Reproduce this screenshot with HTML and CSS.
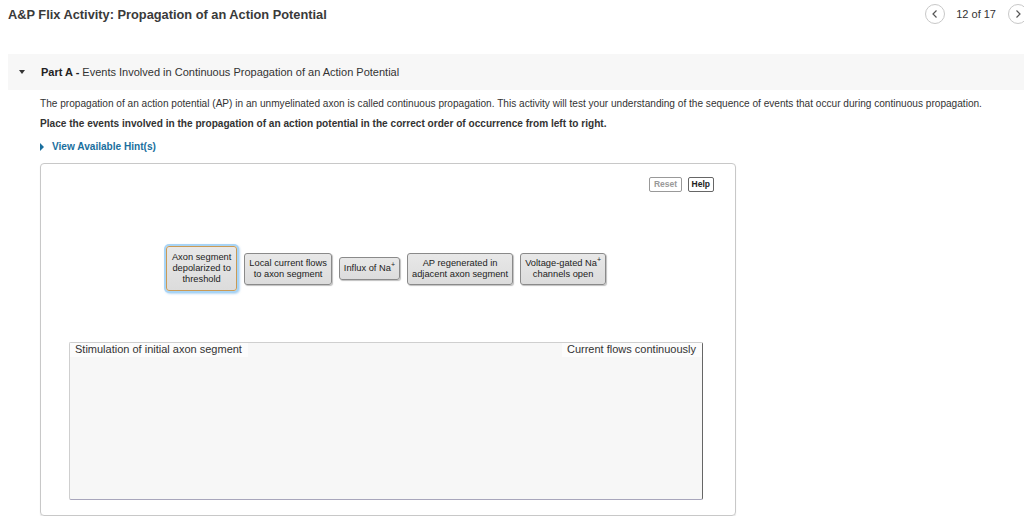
FILE: index.html
```html
<!DOCTYPE html>
<html lang="en">
<head>
  <meta charset="UTF-8">
  <meta name="viewport" content="width=device-width, initial-scale=1.0">
  <title>A&amp;P Flix Activity</title>
  <link rel="stylesheet" href="styles.css">
</head>
<body>
  <header class="top-bar">
    <h1 class="activity-title">A&amp;P Flix Activity: Propagation of an Action Potential</h1>
    <nav class="pager">
      <span class="pager-btn">
        <svg width="10" height="10" viewBox="0 0 10 10"><path d="M6.5 1.5 L3 5 L6.5 8.5" fill="none" stroke="#555" stroke-width="1.2"/></svg>
      </span>
      <span class="pager-count">12 of 17</span>
      <span class="pager-btn">
        <svg width="10" height="10" viewBox="0 0 10 10"><path d="M3.5 1.5 L7 5 L3.5 8.5" fill="none" stroke="#555" stroke-width="1.2"/></svg>
      </span>
    </nav>
  </header>

  <section class="part">
    <div class="part-head">
      <span class="caret-down"></span>
      <span><b>Part A -</b> Events Involved in Continuous Propagation of an Action Potential</span>
    </div>

    <div class="part-body">
      <p class="intro">The propagation of an action potential (AP) in an unmyelinated axon is called continuous propagation. This activity will test your understanding of the sequence of events that occur during continuous propagation.</p>
      <p class="task">Place the events involved in the propagation of an action potential in the correct order of occurrence from left to right.</p>
      <a class="hint-link" href="#"><span class="caret-right"></span>View Available Hint(s)</a>

      <div class="sorter">
        <div class="sorter-tools">
          <button class="tool-btn disabled">Reset</button>
          <button class="tool-btn">Help</button>
        </div>

        <div class="tiles">
          <div class="tile selected">Axon segment<br>depolarized to<br>threshold</div>
          <div class="tile">Local current flows<br>to axon segment</div>
          <div class="tile small">Influx of Na<sup>+</sup></div>
          <div class="tile">AP regenerated in<br>adjacent axon segment</div>
          <div class="tile">Voltage-gated Na<sup>+</sup><br>channels open</div>
        </div>

        <div class="drop-zone">
          <div class="drop-labels">
            <span class="drop-label">Stimulation of initial axon segment</span>
            <span class="drop-label">Current flows continuously</span>
          </div>
        </div>
      </div>
    </div>
  </section>
</body>
</html>
```

FILE: styles.css
```css
* {
  margin: 0;
  padding: 0;
  box-sizing: border-box;
}

body {
  font-family: "Liberation Sans", Arial, sans-serif;
  color: #333;
  background: #fff;
  overflow: hidden;
}

/* title row */
.top-bar {
  display: flex;
  justify-content: space-between;
  align-items: center;
  height: 28px;
  padding-left: 8px;
  margin-right: -4px;
}

.activity-title {
  font-size: 12.8px;
  font-weight: bold;
  color: #3a3a3a;
}

.pager {
  display: flex;
  align-items: center;
  gap: 6px;
}

.pager-btn {
  width: 20px;
  height: 20px;
  border: 1px solid #c8c8c8;
  border-radius: 50%;
  display: flex;
  align-items: center;
  justify-content: center;
}

.pager-count {
  font-size: 11px;
  color: #333;
  margin: 0 6px 0 5px;
}

/* part section */
.part {
  margin-top: 26px;
}

.part-head {
  margin-left: 8px;
  height: 36px;
  background: #f7f7f7;
  display: flex;
  align-items: center;
  font-size: 11px;
  color: #333;
}

.part-head b {
  color: #222;
}

.caret-down {
  width: 0;
  height: 0;
  border-left: 3.5px solid transparent;
  border-right: 3.5px solid transparent;
  border-top: 4px solid #333;
  margin: 0 16px 0 11px;
}

.part-body {
  padding: 8px 0 0 40px;
  width: 1024px;
}

.intro {
  font-size: 10.1px;
  line-height: 12px;
  color: #333;
}

.task {
  font-size: 10.1px;
  font-weight: bold;
  line-height: 12px;
  margin-top: 8px;
  color: #333;
}

.hint-link {
  display: inline-flex;
  align-items: center;
  margin-top: 11px;
  font-size: 10.1px;
  font-weight: bold;
  color: #1a6f9e;
  text-decoration: none;
}

.caret-right {
  width: 0;
  height: 0;
  border-top: 4px solid transparent;
  border-bottom: 4px solid transparent;
  border-left: 4.5px solid #1a6f9e;
  margin-right: 8px;
}

/* sorting box */
.sorter {
  width: 696px;
  height: 353px;
  margin-top: 8px;
  border: 1px solid #c8c8c8;
  border-radius: 4px;
  box-shadow: 0 1px 1px rgba(0, 0, 0, 0.12);
  padding: 13px 0 0 0;
}

.sorter-tools {
  display: flex;
  justify-content: flex-end;
  gap: 6px;
  padding-right: 21px;
}

.tool-btn {
  font-family: inherit;
  font-size: 8.5px;
  font-weight: bold;
  height: 15px;
  padding: 0 3px;
  background: #fff;
  border: 1px solid #666;
  border-radius: 2px;
  color: #222;
}

.tool-btn.disabled {
  color: #999;
  border-color: #999;
  padding: 0 3.5px;
}

.tiles {
  display: flex;
  justify-content: center;
  align-items: center;
  gap: 7px;
  margin-top: 54px;
  height: 46px;
  padding-right: 4px;
}

.tile {
  font-size: 9.3px;
  line-height: 11px;
  text-align: center;
  color: #222;
  padding: 4px 4px;
  background: linear-gradient(#e8e8e8, #dcdcdc);
  border: 1px solid #8a8a8a;
  border-radius: 3px;
  box-shadow: 1px 1px 1px rgba(0, 0, 0, 0.25);
}

.tile.small {
  padding: 5px 4px;
}

.tile sup {
  font-size: 7px;
  line-height: 0;
}

.tile.selected {
  border-color: #c99a55;
  padding: 5px 5px;
  box-shadow: 0 0 0 2px #a8d4f5, 1px 1px 2px 2px rgba(120, 180, 230, 0.5);
}

.drop-zone {
  width: 634px;
  height: 158px;
  margin: 50px 0 0 28px;
  background: #f7f7f7;
  border: 1px solid #cfcfcf;
  border-right-color: #666;
  border-bottom-color: #a8a6bc;
  border-radius: 2px;
}

.drop-labels {
  display: flex;
  justify-content: space-between;
}

.drop-label {
  font-size: 11px;
  color: #333;
  background: #fcfcfc;
  padding: 0 6px 2px 5px;
}
```
